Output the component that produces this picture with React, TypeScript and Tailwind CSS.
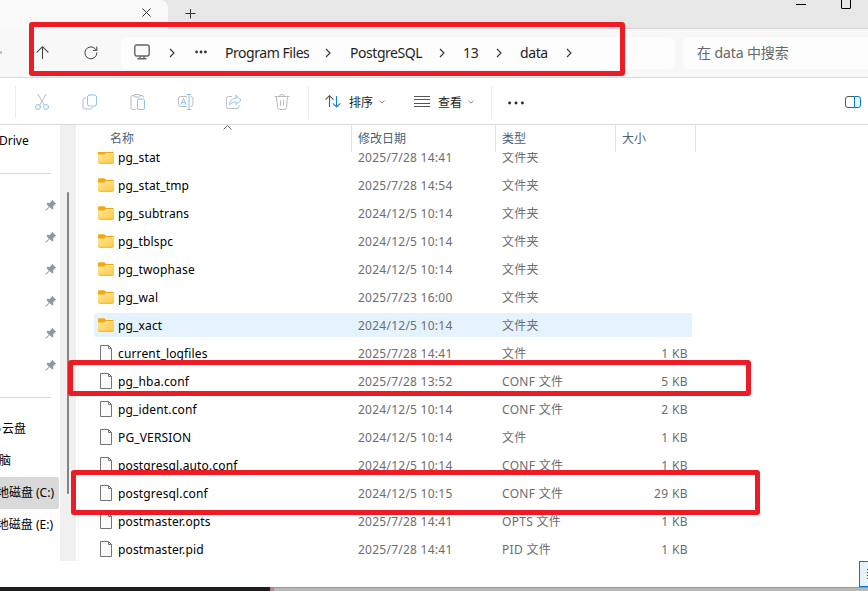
import type { ReactNode } from 'react';

type Entry = {
  name: string;
  date: string;
  kind: string;
  size?: string;
  folder?: boolean;
  hovered?: boolean;
};

const entries: Entry[] = [
  { name: 'pg_stat', date: '2025/7/28 14:41', kind: '文件夹', folder: true },
  { name: 'pg_stat_tmp', date: '2025/7/28 14:54', kind: '文件夹', folder: true },
  { name: 'pg_subtrans', date: '2024/12/5 10:14', kind: '文件夹', folder: true },
  { name: 'pg_tblspc', date: '2024/12/5 10:14', kind: '文件夹', folder: true },
  { name: 'pg_twophase', date: '2024/12/5 10:14', kind: '文件夹', folder: true },
  { name: 'pg_wal', date: '2025/7/23 16:00', kind: '文件夹', folder: true },
  { name: 'pg_xact', date: '2024/12/5 10:14', kind: '文件夹', folder: true, hovered: true },
  { name: 'current_logfiles', date: '2025/7/28 14:41', kind: '文件', size: '1 KB' },
  { name: 'pg_hba.conf', date: '2025/7/28 13:52', kind: 'CONF 文件', size: '5 KB' },
  { name: 'pg_ident.conf', date: '2024/12/5 10:14', kind: 'CONF 文件', size: '2 KB' },
  { name: 'PG_VERSION', date: '2024/12/5 10:14', kind: '文件', size: '1 KB' },
  { name: 'postgresql.auto.conf', date: '2024/12/5 10:14', kind: 'CONF 文件', size: '1 KB' },
  { name: 'postgresql.conf', date: '2024/12/5 10:15', kind: 'CONF 文件', size: '29 KB' },
  { name: 'postmaster.opts', date: '2025/7/28 14:41', kind: 'OPTS 文件', size: '1 KB' },
  { name: 'postmaster.pid', date: '2025/7/28 14:41', kind: 'PID 文件', size: '1 KB' },
];

const FolderIcon = () => (
  <svg width="16" height="14" viewBox="0 0 16 14" className="mb-px">
    <defs>
      <linearGradient id="folder" x1="0" y1="0" x2="1" y2="1">
        <stop offset="0" stopColor="#ffe69a" />
        <stop offset="1" stopColor="#fdca45" />
      </linearGradient>
    </defs>
    <path d="M0 1.5A1.200 1.200 0 0 1 1.200.300h5.300L8 2h7a1 1 0 0 1 1 1v5H0z" fill="#f0a90f" />
    <path d="M0 4.500h6.200L8 3h8v9a1.200 1.200 0 0 1-1.200 1.200H1.200A1.200 1.200 0 0 1 0 12z" fill="url(#folder)" />
    <path d="M.3 12.600c.3.500.7.700 1.200.7h13c.5 0 .9-.2 1.200-.7" fill="none" stroke="#e0a020" strokeWidth=".8" />
  </svg>
);

const FileIcon = () => (
  <svg width="12" height="16" viewBox="0 0 12 16" fill="none" stroke="#747474">
    <path d="M.5.5h8l3 3v12H.5z" fill="#fafafa" />
    <path d="M8.5.5v3h3" />
  </svg>
);

const PinIcon = () => (
  <svg width="12" height="12" viewBox="0 0 12 12" fill="#8d979e">
    <path d="M7 .7 11.3 5l-1.5.5-1.7 1.8.1 2.4-1 .9L4.7 8.1 1.2 11.5l-.8.1.1-.8L4 7.400 1.400 4.900l.9-1 2.400.1 1.800-1.700z" />
  </svg>
);

const Chevron = () => (
  <svg width="6" height="10" viewBox="0 0 6 10" fill="none" stroke="#333" strokeWidth="1.1" className="shrink-0">
    <path d="m1 1 4 4-4 4" />
  </svg>
);

const DownChevron = () => (
  <svg width="6" height="4" viewBox="0 0 6 4" fill="none" stroke="#8a8a8a">
    <path d="m.5.7 2.5 2.4L5.5.7" />
  </svg>
);

const Dots = ({ size, className }: { size: number; className: string }) => (
  <svg width={size} height="4" viewBox={`0 0 ${size} 4`} className={className}>
    <circle cx="1.6" cy="2" r="1.4" />
    <circle cx={size / 2} cy="2" r="1.4" />
    <circle cx={size - 1.6} cy="2" r="1.4" />
  </svg>
);

const ToolButton = ({ children }: { children: ReactNode }) => (
  <div className="flex w-12 items-center justify-center">
    <svg width="18" height="18" viewBox="0 0 18 18" fill="none" stroke="#bcbcbc" strokeLinejoin="round" strokeLinecap="round">
      {children}
    </svg>
  </div>
);

const TitleBar = () => (
  <div className="flex h-7 shrink-0 bg-[#e7e7e7]">
    <div className="flex w-[168px] rounded-tr-lg bg-[#f9f9f9] pt-2 pl-[142px]">
      <svg width="9" height="9" viewBox="0 0 9 9" stroke="#333">
        <path d="m.5.5 8 8M8.5.5l-8 8" />
      </svg>
    </div>
    <svg width="11" height="10" viewBox="0 0 11 10" className="mt-[9px] ml-[17px]" stroke="#333">
      <path d="M.5 4.500h10M5.500 0v9.500" />
    </svg>
    <div className="ml-auto flex pr-[17px]">
      <svg width="10" height="1" className="mt-1 mr-[35px]">
        <path d="M0 .5h10" stroke="#000" />
      </svg>
      <svg width="10" height="9" viewBox="0 0 10 9" fill="none" stroke="#000">
        <rect x=".5" y="-1.5" width="9" height="10" rx=".5" />
      </svg>
    </div>
  </div>
);

const Crumb = ({ className, children }: { className: string; children: ReactNode }) => (
  <span className={'shrink-0 whitespace-nowrap text-sm text-[#1f1f1f] ' + className}>{children}</span>
);

const Navigation = () => (
  <div className="flex h-[49px] shrink-0 flex-col bg-[#f8f8f8]">
    <div className="ml-[168px] h-px shrink-0 bg-[#d6d6d6]" />
    <div className="flex grow items-center pb-px">
      <span className="mr-[34px] h-[3px] w-0.5 rounded-full bg-[#bbb]" />
      <svg width="13" height="13" viewBox="0 0 13 13" fill="none" stroke="#444" strokeWidth="1.1" strokeLinecap="round">
        <path d="M6.500 12.500V.8M1 6.200 6.500.7 12 6.200" />
      </svg>
      <svg width="14" height="14" viewBox="0 0 14 14" fill="none" stroke="#444" strokeLinecap="round" className="ml-[35px]">
        <path d="M12.900 6.800A6 6 0 1 1 11.200 2.700l1.500 1.600M12.800.9v3.500H9.200" />
      </svg>
      <div className="ml-[23px] flex h-8 w-[554px] items-center rounded-md bg-[#fdfdfd] pl-[13px]">
        <svg width="16" height="16" viewBox="0 0 16 16" fill="none" stroke="#666" strokeWidth="1.4" className="mb-px">
          <rect x=".8" y="1" width="14.400" height="11" rx="2" fill="#fafafa" />
          <path d="M6 12v2.500M10 12v2.500M3.500 14.800h9" />
        </svg>
        <div className="ml-[19px] w-[26px]"><Chevron /></div>
        <Dots size={12} className="mb-0.5 fill-[#333]" />
        <Crumb className="ml-[18px] w-[100px] tracking-[-0.45px]">Program Files</Crumb>
        <Chevron />
        <Crumb className="ml-[19px] w-[89px] tracking-[-0.45px]">PostgreSQL</Crumb>
        <Chevron />
        <Crumb className="ml-[18px] w-[33px] tracking-[-0.3px]">13</Crumb>
        <Chevron />
        <Crumb className="ml-[18px] w-[46px] tracking-[-0.4px]">data</Crumb>
        <Chevron />
      </div>
      <div className="ml-2 flex h-8 grow items-center rounded-l-md bg-[#fdfdfd] pl-[14px]">
        <span className="text-sm tracking-[-0.1px] text-[#666]">在 data 中搜索</span>
      </div>
    </div>
  </div>
);

const Toolbar = () => (
  <div className="flex h-12 shrink-0 items-center border-y border-[#d9d9d9] bg-white pt-px">
    <div className="ml-[15px] h-8 w-px bg-[#ececec]" />
    <div className="flex pt-px pl-[2px]">
      <ToolButton>
        <path d="m5 1.500 6 10M13 1.500l-6 10" />
        <circle cx="5" cy="14" r="2.500" stroke="#8dc3ed" />
        <circle cx="13" cy="14" r="2.500" stroke="#8dc3ed" />
      </ToolButton>
      <ToolButton>
        <path d="M4.500 5H4a2 2 0 0 0-2 2v7a2 2 0 0 0 2 2h5.500a2 2 0 0 0 2-1.500" />
        <rect x="6.500" y="2" width="9" height="11" rx="2" stroke="#8dc3ed" />
      </ToolButton>
      <ToolButton>
        <path d="M6 16.500H3.500a1.500 1.500 0 0 1-1.500-1.500V4a1.500 1.500 0 0 1 1.500-1.500H5M11 2.500h2A1.500 1.500 0 0 1 14.500 4" />
        <rect x="5" y="1.500" width="6" height="2.500" rx="1" />
        <rect x="8.500" y="6" width="7" height="10.500" rx="1.500" stroke="#8dc3ed" />
      </ToolButton>
      <ToolButton>
        <path d="M9.500 3.500H3.500a2 2 0 0 0-2 2v6a2 2 0 0 0 2 2h6M14 3.500a2 2 0 0 1 2 2v6a2 2 0 0 1-2 2" />
        <path d="m4 11.500 2.500-6 2.500 6M5 9.500h3M10 1.500h4M12 1.500v15M10 16.500h4" stroke="#8dc3ed" />
      </ToolButton>
      <ToolButton>
        <path d="M6.500 3.500h-3a2 2 0 0 0-2 2v8a2 2 0 0 0 2 2h8.500a2 2 0 0 0 2-2v-1" />
        <path d="M11 2.500 16 7l-5 4.500V9c-3-.1-4.700.9-6.500 3 .3-4 2.500-6.500 6.500-6.800z" stroke="#8dc3ed" />
      </ToolButton>
      <ToolButton>
        <path d="M2 3.500h14M3.500 3.500l1 11a2 2 0 0 0 2 2h5a2 2 0 0 0 2-2l1-11M6.500 3.500a2.500 2 0 0 1 5 0M7.500 7.500v5M10.500 7.500v5" />
      </ToolButton>
    </div>
    <div className="ml-[2px] h-8 w-px bg-[#ececec]" />
    <svg width="16" height="13" viewBox="0 0 16 13" fill="none" stroke="#555" strokeWidth="1.1" className="ml-4">
      <path d="M4.500 12V1M.5 4.700l4-4 4 4" />
      <path d="M11.500 1v11M7.800 8.300l3.700 3.700 3.900-3.700" stroke="#1580d8" />
    </svg>
    <span className="ml-[8px] w-[30px] shrink-0 pt-0.5 text-xs text-[#222]">排序</span>
    <DownChevron />
    <svg width="16" height="11" viewBox="0 0 16 11" stroke="#555" className="ml-[29px]">
      <path d="M0 .5h16M0 3.500h16M0 7.500h16M0 10.500h16" />
    </svg>
    <span className="ml-2 w-[30px] shrink-0 pt-0.5 text-xs text-[#222]">查看</span>
    <DownChevron />
    <div className="ml-[17px] h-8 w-px bg-[#ececec]" />
    <Dots size={16} className="mt-0.5 ml-4 fill-[#222]" />
    <svg width="16" height="12" viewBox="0 0 16 12" fill="none" className="mr-[7px] ml-auto">
      <path d="M9.500.5H3a2.500 2.500 0 0 0-2.500 2.500v6A2.500 2.500 0 0 0 3 11.500h6.500" stroke="#555" />
      <path d="M9.500.5H13A2.500 2.500 0 0 1 15.500 3v6a2.500 2.500 0 0 1-2.500 2.500H9.500z" fill="#eaf5fd" stroke="#0078d4" />
    </svg>
  </div>
);

const Sidebar = () => (
  <div className="h-[436px] w-[60px] shrink-0 overflow-hidden text-xs text-black">
    <div className="flex h-8 items-center">
      <span className="-ml-px">Drive</span>
    </div>
    <div className="mt-4 mr-[9px] h-px bg-[#d5d5d5]" />
    <div className="mt-[15px] mb-4">
      {[0, 1, 2, 3, 4, 5].map((i) => (
        <div key={i} className="flex h-8 items-center justify-end pr-[3px]">
          <PinIcon />
        </div>
      ))}
    </div>
    <div className="mr-[9px] h-px bg-[#d5d5d5]" />
    <div className="mt-[15px] flex h-8 items-center whitespace-nowrap">
      <span className="mr-px size-[3px] -ml-0.5 shrink-0 rounded-full bg-[#3a9be0]" />云盘
    </div>
    <div className="flex h-8 items-center">
      <span className="-ml-px">脑</span>
    </div>
    <div className="mr-px flex h-8 items-center justify-end rounded-r-[3px] bg-[#d9d9d9] pr-[5px] whitespace-nowrap">
      地磁盘 (C:)
    </div>
    <div className="mr-px flex h-8 items-center justify-end pr-[6px] whitespace-nowrap">地磁盘 (E:)</div>
  </div>
);

const ColumnHeader = () => (
  <div className="relative z-10 flex h-[27px] items-center bg-white text-xs text-[#4c607a]">
    <span className="w-[272px] pl-[31px]">名称</span>
    <svg width="9" height="5" viewBox="0 0 9 5" fill="none" stroke="#666" className="absolute top-0 left-[144px]">
      <path d="m.5 4.500 4-4 4 4" />
    </svg>
    <span className="flex h-full w-36 items-center border-l border-[#e2e2e2] pl-1.5">修改日期</span>
    <span className="flex h-full w-[120px] items-center border-l border-[#e2e2e2] pl-1.5">类型</span>
    <span className="flex h-full w-20 items-center border-l border-[#e2e2e2] pl-1.5">大小</span>
    <span className="h-full w-px bg-[#e2e2e2]" />
  </div>
);

const Row = ({ entry }: { entry: Entry }) => (
  <div className="flex h-7 items-center pl-[15px]">
    <div className={'flex h-6 w-[598px] items-center rounded-[2px] ' + (entry.hovered ? 'bg-[#e5f3ff]' : '')}>
      <span className="flex w-6 justify-center">{entry.folder ? <FolderIcon /> : <FileIcon />}</span>
      <span className="w-[240px] pt-0.5 tracking-[0.15px] whitespace-nowrap text-black">{entry.name}</span>
      <span className="w-36 pt-0.5 tracking-[0.25px] whitespace-nowrap text-[#6d6d6d]">{entry.date}</span>
      <span className="w-[110px] pt-0.5 tracking-[0.3px] whitespace-nowrap text-[#6d6d6d]">{entry.kind}</span>
      <span className="grow pt-0.5 pr-1 text-right tracking-[0.4px] text-[#6d6d6d]">{entry.size}</span>
    </div>
  </div>
);

const FileList = () => (
  <div className="ml-[2px] h-[436px] grow border-l border-[#f5f5f5]">
    <ColumnHeader />
    <div className="-mt-[9px] text-xs">
      {entries.map((entry) => (
        <Row key={entry.name} entry={entry} />
      ))}
    </div>
  </div>
);

const Mark = ({ className }: { className: string }) => (
  <div className={'pointer-events-none absolute z-20 rounded-[3px] border-[5px] border-[#ed1c24] ' + className} />
);

const App = () => (
  <div className="relative flex h-[591px] w-[868px] flex-col overflow-hidden bg-white font-['Noto_Sans','Noto_Sans_CJK_SC',sans-serif]">
    <TitleBar />
    <Navigation />
    <Toolbar />
    <div className="flex h-[462px] shrink-0">
      <Sidebar />
      <div className="h-[436px] w-4 shrink-0 bg-[#f0f0f0] pt-[67px] pl-[7px]">
        <div className="h-[302px] w-0.5 rounded-full bg-[#858585]" />
      </div>
      <FileList />
    </div>
    <div className="flex h-1 shrink-0">
      <div className="w-[270px] bg-[#211c1d]" />
      <div className="w-1 bg-[#b98292]" />
      <div className="grow border-t border-[#999] bg-[#b8b8b8]" />
    </div>

    <div className="absolute top-[561px] left-[859px] flex h-[26px] w-6 items-center border border-[#0078d4] bg-[#e5f3fb] pl-[7px]">
      <svg width="8" height="10" viewBox="0 0 8 10" stroke="#444">
        <path d="M0 .5h8M0 3.500h8M0 6.500h8M0 9.500h8" />
      </svg>
    </div>
    <Mark className="top-[22px] left-[29px] h-[54px] w-[596px]" />
    <Mark className="top-[360px] left-[68px] h-9 w-[683px]" />
    <Mark className="top-[470px] left-[71px] h-[45px] w-[689px]" />
  </div>
);

export default App;
